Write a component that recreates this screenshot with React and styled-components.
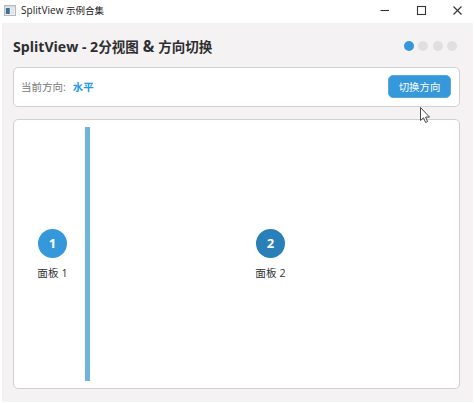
import React, { useState } from "react";
import styled, { createGlobalStyle } from "styled-components";

const GlobalStyle = createGlobalStyle`
  * {
    box-sizing: border-box;
  }

  body {
    margin: 0;
    background: #fff;
    font-family: "Open Sans", "Noto Sans CJK SC", sans-serif;
    overflow: hidden;
  }
`;

const Window = styled.div`
  position: relative;
  display: flex;
  flex-direction: column;
  width: 474px;
  height: 403px;
  padding: 0 1px 1px 2px;
`;

const TitleBar = styled.header`
  display: flex;
  align-items: center;
  height: 23px;
  flex: none;
  padding: 0 10px 3px 2px;
`;

const WindowTitle = styled.span`
  flex: 1;
  margin-left: 5px;
  font-size: 9.5px;
  line-height: 20px;
  color: #222;
  white-space: nowrap;
`;

// Latin runs sit slightly larger than the Chinese text beside them
const Latin = styled.span`
  font-size: ${(props) => props.$size};
`;

const WindowButtons = styled.div`
  display: flex;
  gap: 25px;
`;

const WindowIcon = styled.svg`
  display: block;
  width: 11px;
  height: 11px;
  fill: none;
  stroke: #333;
  stroke-width: 1.1;
`;

const Content = styled.main`
  display: flex;
  flex-direction: column;
  flex: 1;
  padding: 12px 13px 13px 11px;
  background: #f4f2f3;
`;

const Heading = styled.div`
  display: flex;
  align-items: center;
  justify-content: space-between;
  height: 23px;
  padding-right: 3px;
  margin-bottom: 9px;
`;

const Title = styled.h1`
  margin: 0;
  font-size: 13.5px;
  font-weight: 700;
  line-height: 23px;
  color: #2e2e30;
  white-space: nowrap;
`;

const Dots = styled.div`
  display: flex;
  gap: 4.4px;
  margin-bottom: 1px;
`;

const Dot = styled.span`
  width: 10px;
  height: 10px;
  border-radius: 50%;
  background: ${(props) => (props.$active ? "#3498db" : "#e0e0e0")};
`;

const Card = styled.section`
  border: 1px solid #d2d0d1;
  border-radius: 5px;
  background: #fff;
`;

const Toolbar = styled(Card)`
  display: flex;
  align-items: center;
  height: 40px;
  flex: none;
  padding: 0 8px 1px 7px;
  margin-bottom: 12px;
`;

const Label = styled.span`
  font-size: 10.5px;
  color: #777;
`;

const Value = styled.span`
  flex: 1;
  margin-left: 7px;
  font-size: 10.4px;
  font-weight: 700;
  color: #2196e8;
`;

const SwitchButton = styled.button`
  width: 63px;
  height: 23px;
  padding: 0;
  border: 1px solid #5aa9dd;
  border-radius: 5px;
  background: #3498db;
  color: #fff;
  font: 10.4px/20px "Open Sans", "Noto Sans CJK SC", sans-serif;
`;

const Split = styled(Card)`
  display: flex;
  flex-direction: ${(props) => (props.$vertical ? "column" : "row")};
  flex: 1;
  padding: 7px;
`;

const Divider = styled.div`
  flex: 0 0 5px;
  background: #6fb3de;
`;

const Pane = styled.div`
  display: flex;
  flex-direction: column;
  align-items: center;
  justify-content: center;
  gap: 7px;
  flex: ${(props) => props.$flex};
  padding: 1px 1px 0 0;
`;

const Badge = styled.div`
  width: 29px;
  height: 29px;
  border-radius: 50%;
  background: ${(props) => props.$color};
  color: #fff;
  font-size: 13px;
  font-weight: 700;
  line-height: 28px;
  text-align: center;
`;

const PaneLabel = styled.span`
  font-size: 10.7px;
  line-height: 16px;
  color: #333;
`;

const Cursor = styled.svg`
  position: absolute;
  left: 419px;
  top: 106px;
  width: 12px;
  height: 18px;
`;

function AppIcon() {
  return (
    <svg width="12" height="11" viewBox="0 0 12 11">
      <rect x="0.5" y="0.5" width="11" height="10" fill="#eef1f3" stroke="#b4b9be" />
      <rect x="1" y="1" width="10" height="1.5" fill="#d3dae0" />
      <rect x="1.8" y="3" width="4" height="6" fill="#416f96" />
      <rect x="7" y="3" width="3" height="6" fill="#e2e5e8" />
    </svg>
  );
}

export default function App() {
  const [vertical, setVertical] = useState(false);

  return (
    <>
      <GlobalStyle />
      <Window>
        <TitleBar>
          <AppIcon />
          <WindowTitle>
            <Latin $size="10.1px">SplitView</Latin> 示例合集
          </WindowTitle>
          <WindowButtons>
            <WindowIcon viewBox="0 0 11 11">
              <path d="M0.5 5.5h8.5" />
            </WindowIcon>
            <WindowIcon viewBox="0 0 11 11">
              <rect x="1.5" y="1.5" width="8" height="8" />
            </WindowIcon>
            <WindowIcon viewBox="0 0 11 11">
              <path d="M1.5 1.5l8 8M9.5 1.5l-8 8" />
            </WindowIcon>
          </WindowButtons>
        </TitleBar>
        <Content>
          <Heading>
            <Title>
              <Latin $size="14.1px">SplitView - 2</Latin>分视图
              <Latin $size="15.4px"> &amp; </Latin>方向切换
            </Title>
            <Dots>
              <Dot $active />
              <Dot />
              <Dot />
              <Dot />
            </Dots>
          </Heading>
          <Toolbar>
            <Label>当前方向:</Label>
            <Value>{vertical ? "垂直" : "水平"}</Value>
            <SwitchButton onClick={() => setVertical(!vertical)}>切换方向</SwitchButton>
          </Toolbar>
          <Split $vertical={vertical}>
            <Pane $flex="0 0 64px">
              <Badge $color="#3498db">1</Badge>
              <PaneLabel>面板 1</PaneLabel>
            </Pane>
            <Divider />
            <Pane $flex="1">
              <Badge $color="#2980b9">2</Badge>
              <PaneLabel>面板 2</PaneLabel>
            </Pane>
          </Split>
        </Content>
        <Cursor viewBox="0 0 12 18">
          <path
            d="M1.5 1.5v13l3-2.7 2.1 4.7 2-.9-2-4.5h3.9z"
            fill="#fff"
            stroke="#333"
            strokeWidth="0.9"
          />
        </Cursor>
      </Window>
    </>
  );
}
